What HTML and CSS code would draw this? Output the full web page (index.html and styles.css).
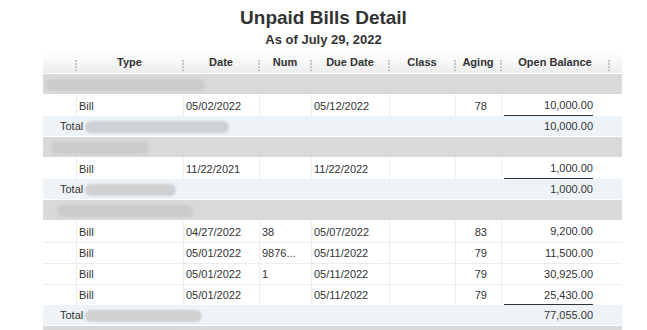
FILE: index.html
```html
<!DOCTYPE html>
<html>
<head>
<meta charset="utf-8">
<link rel="stylesheet" href="styles.css">
</head>
<body>
<div class="report">
  <h1 class="title">Unpaid Bills Detail</h1>
  <div class="subtitle">As of July 29, 2022</div>
  <table class="grid">
    <colgroup>
      <col class="c-pad"><col class="c-type"><col class="c-date"><col class="c-num"><col class="c-due"><col class="c-class"><col class="c-aging"><col class="c-bal"><col class="c-end">
    </colgroup>
    <thead>
      <tr>
        <th></th><th class="h">Type</th><th class="h">Date</th><th class="h">Num</th><th class="h">Due Date</th><th class="h">Class</th><th class="h">Aging</th><th class="h">Open Balance</th><th class="h"></th>
      </tr>
    </thead>
    <tbody>
      <tr class="group"><td colspan="9"><span class="blob g1"></span></td></tr>
      <tr class="bill">
        <td></td><td class="cell">Bill</td><td class="cell">05/02/2022</td><td class="cell"></td><td class="cell">05/12/2022</td><td class="cell"></td><td class="cell num">78</td><td class="cell bal"><div class="amt under">10,000.00</div></td><td></td>
      </tr>
      <tr class="total"><td colspan="7" class="tlabel">Total<span class="blob t1"></span></td><td class="bal"><div class="amt">10,000.00</div></td><td></td></tr>

      <tr class="group"><td colspan="9"><span class="blob g2"></span></td></tr>
      <tr class="bill">
        <td></td><td class="cell">Bill</td><td class="cell">11/22/2021</td><td class="cell"></td><td class="cell">11/22/2022</td><td class="cell"></td><td class="cell num"></td><td class="cell bal"><div class="amt under">1,000.00</div></td><td></td>
      </tr>
      <tr class="total"><td colspan="7" class="tlabel">Total<span class="blob t2"></span></td><td class="bal"><div class="amt">1,000.00</div></td><td></td></tr>

      <tr class="group"><td colspan="9"><span class="blob g3"></span></td></tr>
      <tr class="bill">
        <td></td><td class="cell">Bill</td><td class="cell">04/27/2022</td><td class="cell">38</td><td class="cell">05/07/2022</td><td class="cell"></td><td class="cell num">83</td><td class="cell bal"><div class="amt">9,200.00</div></td><td></td>
      </tr>
      <tr class="bill">
        <td></td><td class="cell">Bill</td><td class="cell">05/01/2022</td><td class="cell">9876...</td><td class="cell">05/11/2022</td><td class="cell"></td><td class="cell num">79</td><td class="cell bal"><div class="amt">11,500.00</div></td><td></td>
      </tr>
      <tr class="bill">
        <td></td><td class="cell">Bill</td><td class="cell">05/01/2022</td><td class="cell">1</td><td class="cell">05/11/2022</td><td class="cell"></td><td class="cell num">79</td><td class="cell bal"><div class="amt">30,925.00</div></td><td></td>
      </tr>
      <tr class="bill">
        <td></td><td class="cell">Bill</td><td class="cell">05/01/2022</td><td class="cell"></td><td class="cell">05/11/2022</td><td class="cell"></td><td class="cell num">79</td><td class="cell bal"><div class="amt under">25,430.00</div></td><td></td>
      </tr>
      <tr class="total"><td colspan="7" class="tlabel">Total<span class="blob t3"></span></td><td class="bal"><div class="amt">77,055.00</div></td><td></td></tr>
      <tr class="group"><td colspan="9"><span class="blob g4"></span></td></tr>
    </tbody>
  </table>
</div>
</body>
</html>
```

FILE: styles.css
```css
html, body {
  margin: 0;
  padding: 0;
  background: #ffffff;
}

body {
  font-family: "Liberation Sans", Arial, sans-serif;
  color: #333333;
  overflow: hidden;
  height: 330px;
}

.report {
  width: 647px;
}

.title {
  margin: 0;
  padding-top: 6px;
  font-size: 19px;
  line-height: 24px;
  font-weight: bold;
  text-align: center;
  color: #333333;
}

.subtitle {
  margin-top: 2px;
  font-size: 13px;
  line-height: 16px;
  font-weight: bold;
  text-align: center;
  color: #333333;
}

.grid {
  margin-top: 4px;
  margin-left: 43px;
  width: 579px;
  table-layout: fixed;
  border-collapse: separate;
  border-spacing: 0;
  font-size: 11px;
}

.c-pad { width: 33px; }
.c-type { width: 107px; }
.c-date { width: 76px; }
.c-num { width: 52px; }
.c-due { width: 78px; }
.c-class { width: 66px; }
.c-aging { width: 46px; }
.c-bal { width: 108px; }
.c-end { width: 13px; }

thead th {
  height: 21px;
  padding: 0;
  line-height: 21px;
  font-weight: bold;
  font-size: 11px;
  text-align: center;
  background: linear-gradient(#ffffff, #ececec);
  border-bottom: 1px solid #ffffff;
  white-space: nowrap;
}

thead th.h {
  position: relative;
}

thead th.h::before {
  content: "";
  position: absolute;
  left: -1px;
  top: 8px;
  width: 2px;
  height: 11px;
  background: repeating-linear-gradient(to bottom, #c4c4c4 0 2px, transparent 2px 3px);
}

td {
  padding: 0;
  white-space: nowrap;
  overflow: hidden;
}

.group td {
  background: #d9d9d9;
  height: 20px;
  line-height: 20px;
  border-bottom: 1px solid #ffffff;
}

.blob {
  display: inline-block;
  height: 12px;
  border-radius: 6px;
  vertical-align: middle;
  filter: blur(1px);
}

.group .blob {
  background: #cbcbcd;
}

.total .blob {
  background: #cfd0d2;
  margin-left: 2px;
  margin-top: -1px;
}

.g1 { margin-left: 3px; width: 159px; }
.g2 { margin-left: 8px; width: 98px; }
.g3 { margin-left: 14px; width: 136px; }
.g4 { margin-left: 10px; width: 120px; }
.t1 { width: 144px; }
.t2 { width: 91px; }
.t3 { width: 117px; }

.bill td {
  line-height: 20px;
  height: 21px;
  color: #333333;
}

.bill + .bill td {
  height: 20px;
  border-top: 1px solid #ececec;
}

.bill .cell {
  border-left: 1px solid #ececec;
  padding: 0 2px;
}

.bill .num {
  text-align: right;
  padding-right: 14px;
}

.bal {
  text-align: right;
}

.bill .cell.bal {
  padding: 0 16px 0 2px;
}

.amt {
  line-height: 20px;
  height: 20px;
}

.bill .amt {
  box-sizing: border-box;
  height: 21px;
  border-bottom: 1px solid transparent;
}

.bill + .bill .amt {
  height: 20px;
}

.bill .amt.under {
  border-bottom-color: #333333;
}

.total td {
  background: #eef3f7;
  height: 20px;
  line-height: 20px;
  border-bottom: 1px solid #ffffff;
}

.total .tlabel {
  padding-left: 17px;
}

.total .bal {
  padding: 0 16px 0 3px;
}
```
